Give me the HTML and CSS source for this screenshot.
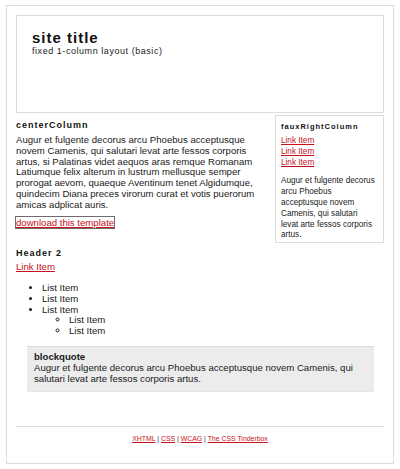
FILE: index.html
```html
<!DOCTYPE html>
<html lang="en">
<head>
<meta charset="utf-8">
<title>site title</title>
<link rel="stylesheet" href="styles.css">
</head>
<body>
<div class="page">
  <header class="masthead">
    <h1 class="site-title">site title</h1>
    <p class="tagline">fixed 1-column layout (basic)</p>
  </header>
  <div class="top-row">
    <main class="center-col">
      <h2 class="section-head">centerColumn</h2>
      <p class="body-text">Augur et fulgente decorus arcu Phoebus acceptusque novem Camenis, qui salutari levat arte fessos corporis artus, si Palatinas videt aequos aras remque Romanam Latiumque felix alterum in lustrum mellusque semper prorogat aevom, quaeque Aventinum tenet Algidumque, quindecim Diana preces virorum curat et votis puerorum amicas adplicat auris.</p>
      <p class="download"><a class="download-link" href="#">download this template</a></p>
    </main>
    <aside class="faux-col">
      <h3 class="faux-head">fauxRightColumn</h3>
      <ul class="faux-links">
        <li><a href="#">Link Item</a></li>
        <li><a href="#">Link Item</a></li>
        <li><a href="#">Link Item</a></li>
      </ul>
      <p class="faux-text">Augur et fulgente decorus arcu Phoebus acceptusque novem Camenis, qui salutari levat arte fessos corporis artus.</p>
    </aside>
  </div>
  <section class="more">
    <h2 class="section-head">Header 2</h2>
    <p class="single-link"><a href="#">Link Item</a></p>
    <ul class="bullets">
      <li>List Item</li>
      <li>List Item</li>
      <li>List Item
        <ul class="sub-bullets">
          <li>List Item</li>
          <li>List Item</li>
        </ul>
      </li>
    </ul>
    <blockquote class="quote">
      <p class="quote-label">blockquote</p>
      <p class="quote-text">Augur et fulgente decorus arcu Phoebus acceptusque novem Camenis, qui salutari levat arte fessos corporis artus.</p>
    </blockquote>
  </section>
  <footer class="footer">
    <a href="#">XHTML</a> | <a href="#">CSS</a> | <a href="#">WCAG</a> | <a href="#">The CSS Tinderbox</a>
  </footer>
</div>
</body>
</html>
```
FILE: styles.css
```css
* { box-sizing: border-box; }

html, body {
  margin: 0;
  padding: 0;
  background: #fff;
}

body {
  font-family: "Liberation Sans", Arial, Helvetica, sans-serif;
  color: #1a1a1a;
  font-size: 9.6px;
  line-height: 10.8px;
}

a { color: #c4111b; text-decoration: underline; }

.page {
  width: 388px;
  margin: 5px 0 0 6px;
  border: 1px solid #dcdcdc;
  padding: 9px 9px 9px 9px;
}

.masthead {
  height: 98px;
  border: 1px solid #dcdcdc;
  padding: 14px 0 0 15px;
}

.site-title {
  margin: 0;
  font-size: 15px;
  line-height: 16px;
  font-weight: bold;
  letter-spacing: 1px;
  color: #111;
}

.tagline {
  margin: 0;
  font-size: 9px;
  line-height: 10px;
  letter-spacing: 0.55px;
  color: #222;
}

.top-row {
  display: flex;
  align-items: flex-start;
  gap: 14px;
}

.center-col {
  width: 245px;
  padding-top: 7px;
}

.section-head {
  margin: 0 0 5px 0;
  font-size: 9px;
  line-height: 10px;
  font-weight: bold;
  letter-spacing: 1px;
  color: #111;
}

.body-text {
  margin: 0 0 7px 0;
}

.download {
  margin: 0;
}

.download-link {
  outline: 1px solid #6d6d6d;
  outline-offset: 0;
}

.faux-col {
  width: 109px;
  margin-top: 2px;
  border: 1px solid #dcdcdc;
  padding: 6px 6px 1px 5px;
  font-size: 8.2px;
  line-height: 10.8px;
}

.faux-head {
  margin: 0 0 5px 0;
  font-size: 7.5px;
  line-height: 9px;
  font-weight: bold;
  letter-spacing: 1px;
  color: #111;
}

.faux-links {
  list-style: none;
  margin: 0;
  padding: 0;
}

.faux-text {
  margin: 8px 0 0 0;
}

.more {
  padding-top: 5px;
}

.more .section-head {
  margin-bottom: 4px;
}

.single-link {
  margin: 0 0 10px 0;
}

.bullets {
  margin: 0;
  padding-left: 26px;
  list-style: disc;
}

.sub-bullets {
  margin: 0;
  padding-left: 27px;
  list-style: circle;
}

.quote {
  margin: 9px 10px 0 11px;
  background: #ececec;
  border-top: 1px solid #dadada;
  border-bottom: 1px solid #e6e6e6;
  padding: 5px 8px 7px 7px;
}

.quote p {
  margin: 0;
}

.quote-label {
  font-weight: bold;
}

.footer {
  margin-top: 34px;
  border-top: 1px solid #dcdcdc;
  padding: 8px 0 11px 0;
  text-align: center;
  font-size: 6.9px;
  line-height: 8px;
  color: #333;
}
```
